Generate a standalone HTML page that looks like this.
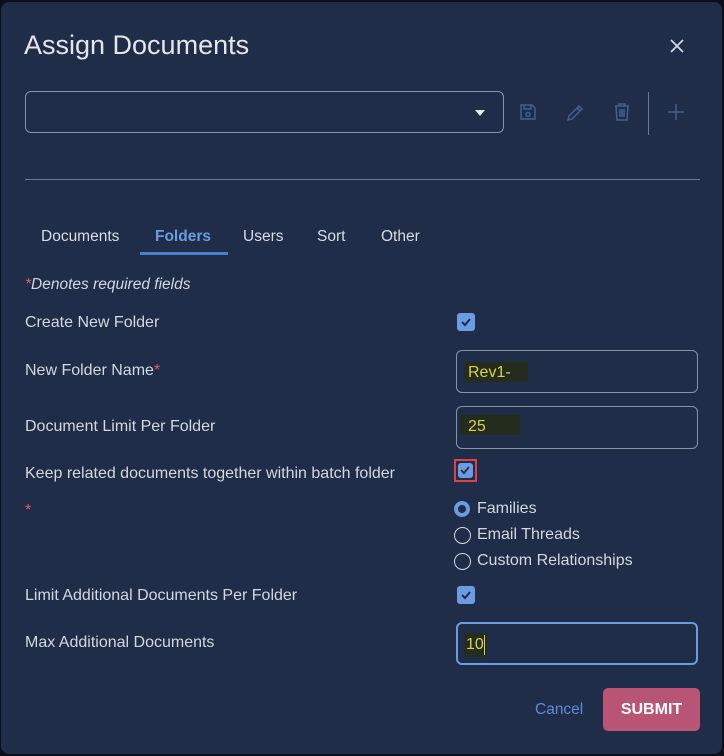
<!DOCTYPE html>
<html><head><meta charset="utf-8"><style>
html,body{margin:0;padding:0;width:724px;height:756px;background:#0b0f18;overflow:hidden}
body{font-family:"Liberation Sans","DejaVu Sans",sans-serif;}
.dlg{position:absolute;left:1px;top:2px;width:721px;height:752px;background:#1f2d48;border-radius:8px;color:#d9dde4}
.abs{position:absolute}
.lbl{position:absolute;left:24px;font-size:16px;color:#d4d8df}
.inp{position:absolute;left:455px;width:242px;height:43px;border:1px solid #8a93a3;border-radius:6px;box-sizing:border-box}
.hl{position:absolute;background:#232c1d;color:#d9d24a;font-size:16px;line-height:18px;padding:0 2px}
.cb{position:absolute;left:456px;width:18px;height:18px;background:#6b9be0;border-radius:3px}
.cb svg{position:absolute;left:3px;top:3px}
.rad{position:absolute;left:453px;width:15px;height:15px;border:1.5px solid #d4d8df;border-radius:50%}
.rt{position:absolute;left:476px;font-size:16px;color:#d4d8df}
.star{color:#e55a62}
</style></head><body>
<div class="dlg">
<div class="abs" style="left:23px;top:28px;font-size:27px;color:#e4e6ea">Assign Documents</div>
<svg class="abs" style="left:669px;top:37px" width="14" height="14"><path d="M1 1L13 13M13 1L1 13" stroke="#d4d8df" stroke-width="1.8"/></svg>
<div class="abs" style="left:24px;top:89px;width:479px;height:42px;border:1px solid #8a93a3;border-radius:6px;box-sizing:border-box"></div>
<svg class="abs" style="left:474px;top:108px" width="10" height="6"><path d="M0 0H10L5 6Z" fill="#e8eaee"/></svg>
<svg class="abs" style="left:518px;top:101px" width="18" height="18" fill="none" stroke="#43608e" stroke-width="1.5"><path d="M2 2H13L16 5V16H2Z"/><path d="M5 2V6H12V2"/><circle cx="9" cy="11.5" r="2"/></svg>
<svg class="abs" style="left:564px;top:101px" width="20" height="20" fill="none" stroke="#43608e" stroke-width="1.5"><path d="M3 17L4 13L14 3L17 6L7 16Z M12 5L15 8"/></svg>
<svg class="abs" style="left:612px;top:100px" width="18" height="20" fill="none" stroke="#43608e" stroke-width="1.5"><path d="M2 4H16M6 4V2H12V4M3 4L4 18H14L15 4M7 7V15M9 7V15M11 7V15"/></svg>
<div class="abs" style="left:647px;top:90px;width:1px;height:43px;background:#707a8c"></div>
<svg class="abs" style="left:667px;top:102px" width="16" height="16"><path d="M8 0V16M0 8H16" stroke="#43608e" stroke-width="1.5"/></svg>
<div class="abs" style="left:24px;top:177px;width:675px;height:1px;background:#707a8c"></div>
<div class="abs" style="left:40px;top:226px;font-size:15.5px">Documents</div>
<div class="abs" style="left:154px;top:226px;font-size:15.5px;color:#6b9be0;font-weight:bold">Folders</div>
<div class="abs" style="left:139px;top:250px;width:88px;height:3px;background:#4a7fd0"></div>
<div class="abs" style="left:242px;top:226px;font-size:15.5px">Users</div>
<div class="abs" style="left:316px;top:226px;font-size:15.5px">Sort</div>
<div class="abs" style="left:380px;top:226px;font-size:15.5px">Other</div>
<div class="lbl" style="top:274px;font-style:italic;font-size:15.5px"><span class="star">*</span>Denotes required fields</div>
<div class="lbl" style="top:312px">Create New Folder</div>
<div class="cb" style="top:311px"><svg width="12" height="12"><path d="M2 6L5 9L10 3" stroke="#1f2d48" stroke-width="2" fill="none"/></svg></div>
<div class="lbl" style="top:360px">New Folder Name<span class="star">*</span></div>
<div class="inp" style="top:348px"></div>
<div class="hl" style="left:463px;top:360px;height:20px;line-height:21px;padding:0 4px">Rev1-&nbsp;&nbsp;&nbsp;</div>
<div class="lbl" style="top:416px">Document Limit Per Folder</div>
<div class="inp" style="top:404px"></div>
<div class="hl" style="left:459px;top:413px;padding:0 8px;height:20px;line-height:24px">25&nbsp;&nbsp;&nbsp;&nbsp;&nbsp;&nbsp;</div>
<div class="lbl" style="top:463px">Keep related documents together within batch folder</div>
<div class="abs" style="left:453px;top:457px;width:23px;height:23px;border:2px solid #e04048;box-sizing:border-box"></div>
<div class="cb" style="top:461px;left:457px;width:15px;height:15px"><svg width="10" height="10" style="left:2px;top:2px"><path d="M1 5L4 8L9 2" stroke="#1f2d48" stroke-width="1.8" fill="none"/></svg></div>
<div class="lbl star" style="top:500px">*</div>
<div class="rad" style="top:499px;border:4.5px solid #6b9be0;width:8px;height:8px;background:#1f2d48"></div>
<div class="rt" style="top:498px">Families</div>
<div class="rad" style="top:525px"></div><div class="rt" style="top:524px">Email Threads</div>
<div class="rad" style="top:551px"></div><div class="rt" style="top:550px">Custom Relationships</div>
<div class="lbl" style="top:585px">Limit Additional Documents Per Folder</div>
<div class="cb" style="top:584px"><svg width="12" height="12"><path d="M2 6L5 9L10 3" stroke="#1f2d48" stroke-width="2" fill="none"/></svg></div>
<div class="lbl" style="top:632px">Max Additional Documents</div>
<div class="inp" style="top:620px;border:2px solid #6b9be0"></div>
<div class="hl" style="left:463px;top:631px;height:24px;line-height:24px">10<span style="display:inline-block;width:1px;height:20px;background:#d9d24a;vertical-align:middle"></span></div>
<div class="abs" style="left:534px;top:699px;font-size:15.5px;color:#5b8dd6">Cancel</div>
<div class="abs" style="left:602px;top:686px;width:97px;height:43px;background:#b85574;border-radius:5px;color:#fff;font-weight:bold;font-size:16px;line-height:44px;text-align:center">SUBMIT</div>
</div>
</body></html>
